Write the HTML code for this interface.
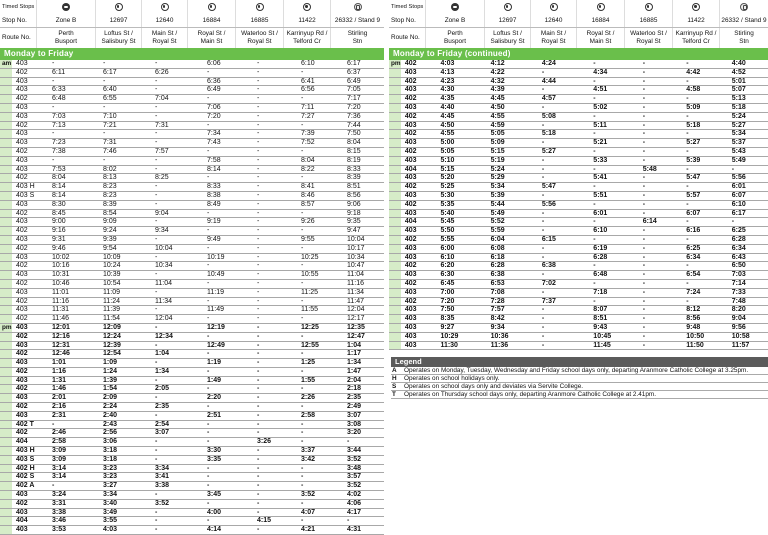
<!DOCTYPE html>
<html><head><meta charset="utf-8"><style>
*{margin:0;padding:0;box-sizing:border-box}
body{width:768px;height:535px;background:#fff;font-family:"Liberation Sans",sans-serif;color:#111;position:relative;overflow:hidden;font-size:7px}
.t{position:absolute;top:0}
.hd{position:relative;height:48px;font-size:6.4px}
.hr{position:absolute;left:0;right:0;display:flex}
.hr div{text-align:center;border-left:1px solid #ddd;display:flex;align-items:center;justify-content:center;line-height:8px}
.hr div:first-child{border-left:none;justify-content:flex-start;padding-left:2px;text-align:left}
.ic{width:8px;height:8px;border-radius:50%;border:1.6px solid #333;position:relative}
.ic:after{content:"";position:absolute;left:1.2px;top:1.2px;width:2.4px;height:2.4px;border-radius:50%;background:#333}
.icb{width:8px;height:8px;border-radius:50%;background:#333;position:relative}
.icb:after{content:"";position:absolute;left:2px;top:2.5px;width:4px;height:2.5px;background:#fff;border-radius:1px}
.icr{width:8px;height:8px;border-radius:50%;border:1.4px solid #555;background:#eee;position:relative}
.icr:after{content:"";position:absolute;left:1.6px;top:1.2px;width:2.2px;height:3px;border:0.8px solid #444;border-radius:1px}
.g{background:#6abf4b;color:#fff;font-weight:bold;font-size:8px;height:12px;line-height:12px;padding-left:4px;letter-spacing:.2px}
.body{position:relative}
.strip{position:absolute;left:0;top:0;bottom:0;width:12px;background:#d6ecc8}
.r{display:flex;height:8.8px;line-height:8px;border-bottom:1px solid #a8a8a8;position:relative;white-space:nowrap}
.r span{display:block}
.r span:nth-child(1){width:12px;padding-left:2px;font-weight:bold;font-size:6.4px}
.r span:nth-child(2){width:24px;padding-left:3px;border-left:1px solid #fff}
.r span:nth-child(3){width:59px;padding-left:16px}
.r span:nth-child(4){width:46px;padding-left:8px}
.r span:nth-child(5){width:46px;padding-left:14px}
.r span:nth-child(6){width:48px;padding-left:20px}
.r span:nth-child(7){width:48px;padding-left:22px}
.r span:nth-child(8){width:47px;padding-left:18px}
.r span:nth-child(9){width:54px;padding-left:17px}
.b .r{font-weight:bold}
.lg{position:absolute;left:391px;top:357px;width:377px}
.lh{background:#5b5b5b;color:#fff;font-weight:bold;font-size:7.5px;height:10px;line-height:10px;padding-left:4px}
.ll{height:8px;line-height:8px;border-bottom:1px solid #aaa;font-size:6.4px;white-space:nowrap}
.ll b{display:inline-block;width:13px;padding-left:1px}
</style></head><body>

<div class="t" style="left:0;width:384px">
<div class="hd">
<div class="hr" style="top:0;height:14px"><div style="width:36px;font-size:5.8px">Timed Stops</div><div style="width:59px"><i class="icb"></i></div><div style="width:46px"><i class="ic"></i></div><div style="width:46px"><i class="ic"></i></div><div style="width:48px"><i class="ic"></i></div><div style="width:48px"><i class="ic"></i></div><div style="width:47px"><i class="ic"></i></div><div style="width:54px"><i class="icr"></i></div></div>
<div class="hr" style="top:14px;height:14px;border-bottom:1px solid #bbb"><div style="width:36px">Stop No.</div><div style="width:59px">Zone B</div><div style="width:46px">12697</div><div style="width:46px">12640</div><div style="width:48px">16884</div><div style="width:48px">16885</div><div style="width:47px">11422</div><div style="width:54px">26332 / Stand 9</div></div>
<div class="hr" style="top:28px;height:20px"><div style="width:36px">Route No.</div><div style="width:59px">Perth<br>Busport</div><div style="width:46px">Loftus St /<br>Salisbury St</div><div style="width:46px">Main St /<br>Royal St</div><div style="width:48px">Royal St /<br>Main St</div><div style="width:48px">Waterloo St /<br>Royal St</div><div style="width:47px">Karrinyup Rd /<br>Telford Cr</div><div style="width:54px">Stirling<br>Stn</div></div>
</div>
<div class="g">Monday to Friday</div>
<div class="body"><div class="strip"></div>
<div class="r"><span>am</span><span>403</span><span>-</span><span>-</span><span>-</span><span>6:06</span><span>-</span><span>6:10</span><span>6:17</span></div>
<div class="r"><span></span><span>402</span><span>6:11</span><span>6:17</span><span>6:26</span><span>-</span><span>-</span><span>-</span><span>6:37</span></div>
<div class="r"><span></span><span>403</span><span>-</span><span>-</span><span>-</span><span>6:36</span><span>-</span><span>6:41</span><span>6:49</span></div>
<div class="r"><span></span><span>403</span><span>6:33</span><span>6:40</span><span>-</span><span>6:49</span><span>-</span><span>6:56</span><span>7:05</span></div>
<div class="r"><span></span><span>402</span><span>6:48</span><span>6:55</span><span>7:04</span><span>-</span><span>-</span><span>-</span><span>7:17</span></div>
<div class="r"><span></span><span>403</span><span>-</span><span>-</span><span>-</span><span>7:06</span><span>-</span><span>7:11</span><span>7:20</span></div>
<div class="r"><span></span><span>403</span><span>7:03</span><span>7:10</span><span>-</span><span>7:20</span><span>-</span><span>7:27</span><span>7:36</span></div>
<div class="r"><span></span><span>402</span><span>7:13</span><span>7:21</span><span>7:31</span><span>-</span><span>-</span><span>-</span><span>7:44</span></div>
<div class="r"><span></span><span>403</span><span>-</span><span>-</span><span>-</span><span>7:34</span><span>-</span><span>7:39</span><span>7:50</span></div>
<div class="r"><span></span><span>403</span><span>7:23</span><span>7:31</span><span>-</span><span>7:43</span><span>-</span><span>7:52</span><span>8:04</span></div>
<div class="r"><span></span><span>402</span><span>7:38</span><span>7:46</span><span>7:57</span><span>-</span><span>-</span><span>-</span><span>8:15</span></div>
<div class="r"><span></span><span>403</span><span>-</span><span>-</span><span>-</span><span>7:58</span><span>-</span><span>8:04</span><span>8:19</span></div>
<div class="r"><span></span><span>403</span><span>7:53</span><span>8:02</span><span>-</span><span>8:14</span><span>-</span><span>8:22</span><span>8:33</span></div>
<div class="r"><span></span><span>402</span><span>8:04</span><span>8:13</span><span>8:25</span><span>-</span><span>-</span><span>-</span><span>8:39</span></div>
<div class="r"><span></span><span>403 H</span><span>8:14</span><span>8:23</span><span>-</span><span>8:33</span><span>-</span><span>8:41</span><span>8:51</span></div>
<div class="r"><span></span><span>403 S</span><span>8:14</span><span>8:23</span><span>-</span><span>8:38</span><span>-</span><span>8:46</span><span>8:56</span></div>
<div class="r"><span></span><span>403</span><span>8:30</span><span>8:39</span><span>-</span><span>8:49</span><span>-</span><span>8:57</span><span>9:06</span></div>
<div class="r"><span></span><span>402</span><span>8:45</span><span>8:54</span><span>9:04</span><span>-</span><span>-</span><span>-</span><span>9:18</span></div>
<div class="r"><span></span><span>403</span><span>9:00</span><span>9:09</span><span>-</span><span>9:19</span><span>-</span><span>9:26</span><span>9:35</span></div>
<div class="r"><span></span><span>402</span><span>9:16</span><span>9:24</span><span>9:34</span><span>-</span><span>-</span><span>-</span><span>9:47</span></div>
<div class="r"><span></span><span>403</span><span>9:31</span><span>9:39</span><span>-</span><span>9:49</span><span>-</span><span>9:55</span><span>10:04</span></div>
<div class="r"><span></span><span>402</span><span>9:46</span><span>9:54</span><span>10:04</span><span>-</span><span>-</span><span>-</span><span>10:17</span></div>
<div class="r"><span></span><span>403</span><span>10:02</span><span>10:09</span><span>-</span><span>10:19</span><span>-</span><span>10:25</span><span>10:34</span></div>
<div class="r"><span></span><span>402</span><span>10:16</span><span>10:24</span><span>10:34</span><span>-</span><span>-</span><span>-</span><span>10:47</span></div>
<div class="r"><span></span><span>403</span><span>10:31</span><span>10:39</span><span>-</span><span>10:49</span><span>-</span><span>10:55</span><span>11:04</span></div>
<div class="r"><span></span><span>402</span><span>10:46</span><span>10:54</span><span>11:04</span><span>-</span><span>-</span><span>-</span><span>11:16</span></div>
<div class="r"><span></span><span>403</span><span>11:01</span><span>11:09</span><span>-</span><span>11:19</span><span>-</span><span>11:25</span><span>11:34</span></div>
<div class="r"><span></span><span>402</span><span>11:16</span><span>11:24</span><span>11:34</span><span>-</span><span>-</span><span>-</span><span>11:47</span></div>
<div class="r"><span></span><span>403</span><span>11:31</span><span>11:39</span><span>-</span><span>11:49</span><span>-</span><span>11:55</span><span>12:04</span></div>
<div class="r"><span></span><span>402</span><span>11:46</span><span>11:54</span><span>12:04</span><span>-</span><span>-</span><span>-</span><span>12:17</span></div>
<div class="b">
<div class="r"><span>pm</span><span>403</span><span>12:01</span><span>12:09</span><span>-</span><span>12:19</span><span>-</span><span>12:25</span><span>12:35</span></div>
<div class="r"><span></span><span>402</span><span>12:16</span><span>12:24</span><span>12:34</span><span>-</span><span>-</span><span>-</span><span>12:47</span></div>
<div class="r"><span></span><span>403</span><span>12:31</span><span>12:39</span><span>-</span><span>12:49</span><span>-</span><span>12:55</span><span>1:04</span></div>
<div class="r"><span></span><span>402</span><span>12:46</span><span>12:54</span><span>1:04</span><span>-</span><span>-</span><span>-</span><span>1:17</span></div>
<div class="r"><span></span><span>403</span><span>1:01</span><span>1:09</span><span>-</span><span>1:19</span><span>-</span><span>1:25</span><span>1:34</span></div>
<div class="r"><span></span><span>402</span><span>1:16</span><span>1:24</span><span>1:34</span><span>-</span><span>-</span><span>-</span><span>1:47</span></div>
<div class="r"><span></span><span>403</span><span>1:31</span><span>1:39</span><span>-</span><span>1:49</span><span>-</span><span>1:55</span><span>2:04</span></div>
<div class="r"><span></span><span>402</span><span>1:46</span><span>1:54</span><span>2:05</span><span>-</span><span>-</span><span>-</span><span>2:18</span></div>
<div class="r"><span></span><span>403</span><span>2:01</span><span>2:09</span><span>-</span><span>2:20</span><span>-</span><span>2:26</span><span>2:35</span></div>
<div class="r"><span></span><span>402</span><span>2:16</span><span>2:24</span><span>2:35</span><span>-</span><span>-</span><span>-</span><span>2:49</span></div>
<div class="r"><span></span><span>403</span><span>2:31</span><span>2:40</span><span>-</span><span>2:51</span><span>-</span><span>2:58</span><span>3:07</span></div>
<div class="r"><span></span><span>402 T</span><span>-</span><span>2:43</span><span>2:54</span><span>-</span><span>-</span><span>-</span><span>3:08</span></div>
<div class="r"><span></span><span>402</span><span>2:46</span><span>2:56</span><span>3:07</span><span>-</span><span>-</span><span>-</span><span>3:20</span></div>
<div class="r"><span></span><span>404</span><span>2:58</span><span>3:06</span><span>-</span><span>-</span><span>3:26</span><span>-</span><span>-</span></div>
<div class="r"><span></span><span>403 H</span><span>3:09</span><span>3:18</span><span>-</span><span>3:30</span><span>-</span><span>3:37</span><span>3:44</span></div>
<div class="r"><span></span><span>403 S</span><span>3:09</span><span>3:18</span><span>-</span><span>3:35</span><span>-</span><span>3:42</span><span>3:52</span></div>
<div class="r"><span></span><span>402 H</span><span>3:14</span><span>3:23</span><span>3:34</span><span>-</span><span>-</span><span>-</span><span>3:48</span></div>
<div class="r"><span></span><span>402 S</span><span>3:14</span><span>3:23</span><span>3:41</span><span>-</span><span>-</span><span>-</span><span>3:57</span></div>
<div class="r"><span></span><span>402 A</span><span>-</span><span>3:27</span><span>3:38</span><span>-</span><span>-</span><span>-</span><span>3:52</span></div>
<div class="r"><span></span><span>403</span><span>3:24</span><span>3:34</span><span>-</span><span>3:45</span><span>-</span><span>3:52</span><span>4:02</span></div>
<div class="r"><span></span><span>402</span><span>3:31</span><span>3:40</span><span>3:52</span><span>-</span><span>-</span><span>-</span><span>4:06</span></div>
<div class="r"><span></span><span>403</span><span>3:38</span><span>3:49</span><span>-</span><span>4:00</span><span>-</span><span>4:07</span><span>4:17</span></div>
<div class="r"><span></span><span>404</span><span>3:46</span><span>3:55</span><span>-</span><span>-</span><span>4:15</span><span>-</span><span>-</span></div>
<div class="r"><span></span><span>403</span><span>3:53</span><span>4:03</span><span>-</span><span>4:14</span><span>-</span><span>4:21</span><span>4:31</span></div>
</div></div></div>

<div class="t" style="left:389px;width:379px">
<div class="hd">
<div class="hr" style="top:0;height:14px"><div style="width:36px;font-size:5.8px">Timed Stops</div><div style="width:59px"><i class="icb"></i></div><div style="width:46px"><i class="ic"></i></div><div style="width:46px"><i class="ic"></i></div><div style="width:48px"><i class="ic"></i></div><div style="width:48px"><i class="ic"></i></div><div style="width:47px"><i class="ic"></i></div><div style="width:49px"><i class="icr"></i></div></div>
<div class="hr" style="top:14px;height:14px;border-bottom:1px solid #bbb"><div style="width:36px">Stop No.</div><div style="width:59px">Zone B</div><div style="width:46px">12697</div><div style="width:46px">12640</div><div style="width:48px">16884</div><div style="width:48px">16885</div><div style="width:47px">11422</div><div style="width:49px">26332 / Stand 9</div></div>
<div class="hr" style="top:28px;height:20px"><div style="width:36px">Route No.</div><div style="width:59px">Perth<br>Busport</div><div style="width:46px">Loftus St /<br>Salisbury St</div><div style="width:46px">Main St /<br>Royal St</div><div style="width:48px">Royal St /<br>Main St</div><div style="width:48px">Waterloo St /<br>Royal St</div><div style="width:47px">Karrinyup Rd /<br>Telford Cr</div><div style="width:49px">Stirling<br>Stn</div></div>
</div>
<div class="g">Monday to Friday (continued)</div>
<div class="body b"><div class="strip"></div>
<div class="r"><span>pm</span><span>402</span><span>4:03</span><span>4:12</span><span>4:24</span><span>-</span><span>-</span><span>-</span><span>4:40</span></div>
<div class="r"><span></span><span>403</span><span>4:13</span><span>4:22</span><span>-</span><span>4:34</span><span>-</span><span>4:42</span><span>4:52</span></div>
<div class="r"><span></span><span>402</span><span>4:23</span><span>4:32</span><span>4:44</span><span>-</span><span>-</span><span>-</span><span>5:01</span></div>
<div class="r"><span></span><span>403</span><span>4:30</span><span>4:39</span><span>-</span><span>4:51</span><span>-</span><span>4:58</span><span>5:07</span></div>
<div class="r"><span></span><span>402</span><span>4:35</span><span>4:45</span><span>4:57</span><span>-</span><span>-</span><span>-</span><span>5:13</span></div>
<div class="r"><span></span><span>403</span><span>4:40</span><span>4:50</span><span>-</span><span>5:02</span><span>-</span><span>5:09</span><span>5:18</span></div>
<div class="r"><span></span><span>402</span><span>4:45</span><span>4:55</span><span>5:08</span><span>-</span><span>-</span><span>-</span><span>5:24</span></div>
<div class="r"><span></span><span>403</span><span>4:50</span><span>4:59</span><span>-</span><span>5:11</span><span>-</span><span>5:18</span><span>5:27</span></div>
<div class="r"><span></span><span>402</span><span>4:55</span><span>5:05</span><span>5:18</span><span>-</span><span>-</span><span>-</span><span>5:34</span></div>
<div class="r"><span></span><span>403</span><span>5:00</span><span>5:09</span><span>-</span><span>5:21</span><span>-</span><span>5:27</span><span>5:37</span></div>
<div class="r"><span></span><span>402</span><span>5:05</span><span>5:15</span><span>5:27</span><span>-</span><span>-</span><span>-</span><span>5:43</span></div>
<div class="r"><span></span><span>403</span><span>5:10</span><span>5:19</span><span>-</span><span>5:33</span><span>-</span><span>5:39</span><span>5:49</span></div>
<div class="r"><span></span><span>404</span><span>5:15</span><span>5:24</span><span>-</span><span>-</span><span>5:48</span><span>-</span><span>-</span></div>
<div class="r"><span></span><span>403</span><span>5:20</span><span>5:29</span><span>-</span><span>5:41</span><span>-</span><span>5:47</span><span>5:56</span></div>
<div class="r"><span></span><span>402</span><span>5:25</span><span>5:34</span><span>5:47</span><span>-</span><span>-</span><span>-</span><span>6:01</span></div>
<div class="r"><span></span><span>403</span><span>5:30</span><span>5:39</span><span>-</span><span>5:51</span><span>-</span><span>5:57</span><span>6:07</span></div>
<div class="r"><span></span><span>402</span><span>5:35</span><span>5:44</span><span>5:56</span><span>-</span><span>-</span><span>-</span><span>6:10</span></div>
<div class="r"><span></span><span>403</span><span>5:40</span><span>5:49</span><span>-</span><span>6:01</span><span>-</span><span>6:07</span><span>6:17</span></div>
<div class="r"><span></span><span>404</span><span>5:45</span><span>5:52</span><span>-</span><span>-</span><span>6:14</span><span>-</span><span>-</span></div>
<div class="r"><span></span><span>403</span><span>5:50</span><span>5:59</span><span>-</span><span>6:10</span><span>-</span><span>6:16</span><span>6:25</span></div>
<div class="r"><span></span><span>402</span><span>5:55</span><span>6:04</span><span>6:15</span><span>-</span><span>-</span><span>-</span><span>6:28</span></div>
<div class="r"><span></span><span>403</span><span>6:00</span><span>6:08</span><span>-</span><span>6:19</span><span>-</span><span>6:25</span><span>6:34</span></div>
<div class="r"><span></span><span>403</span><span>6:10</span><span>6:18</span><span>-</span><span>6:28</span><span>-</span><span>6:34</span><span>6:43</span></div>
<div class="r"><span></span><span>402</span><span>6:20</span><span>6:28</span><span>6:38</span><span>-</span><span>-</span><span>-</span><span>6:50</span></div>
<div class="r"><span></span><span>403</span><span>6:30</span><span>6:38</span><span>-</span><span>6:48</span><span>-</span><span>6:54</span><span>7:03</span></div>
<div class="r"><span></span><span>402</span><span>6:45</span><span>6:53</span><span>7:02</span><span>-</span><span>-</span><span>-</span><span>7:14</span></div>
<div class="r"><span></span><span>403</span><span>7:00</span><span>7:08</span><span>-</span><span>7:18</span><span>-</span><span>7:24</span><span>7:33</span></div>
<div class="r"><span></span><span>402</span><span>7:20</span><span>7:28</span><span>7:37</span><span>-</span><span>-</span><span>-</span><span>7:48</span></div>
<div class="r"><span></span><span>403</span><span>7:50</span><span>7:57</span><span>-</span><span>8:07</span><span>-</span><span>8:12</span><span>8:20</span></div>
<div class="r"><span></span><span>403</span><span>8:35</span><span>8:42</span><span>-</span><span>8:51</span><span>-</span><span>8:56</span><span>9:04</span></div>
<div class="r"><span></span><span>403</span><span>9:27</span><span>9:34</span><span>-</span><span>9:43</span><span>-</span><span>9:48</span><span>9:56</span></div>
<div class="r"><span></span><span>403</span><span>10:29</span><span>10:36</span><span>-</span><span>10:45</span><span>-</span><span>10:50</span><span>10:58</span></div>
<div class="r"><span></span><span>403</span><span>11:30</span><span>11:36</span><span>-</span><span>11:45</span><span>-</span><span>11:50</span><span>11:57</span></div>
</div></div>

<div class="lg">
<div class="lh">Legend</div>
<div class="ll"><b>A</b>Operates on Monday, Tuesday, Wednesday and Friday school days only, departing Aranmore Catholic College at 3.25pm.</div>
<div class="ll"><b>H</b>Operates on school holidays only.</div>
<div class="ll"><b>S</b>Operates on school days only and deviates via Servite College.</div>
<div class="ll"><b>T</b>Operates on Thursday school days only, departing Aranmore Catholic College at 2.41pm.</div>
</div>
</body></html>
